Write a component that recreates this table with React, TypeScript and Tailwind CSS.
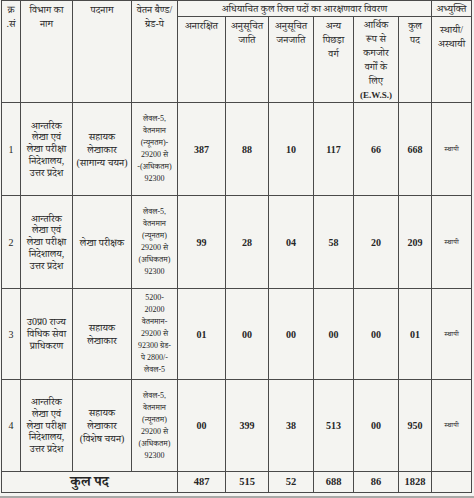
import React from "react";

type Row = {
  no: string;
  dept: string[];
  post: string[];
  pay: string[];
  nums: string[];
  remark: string;
  rowH: string;
};

const dept = ["आन्तरिक", "लेखा एवं", "लेखा परीक्षा", "निदेशालय,", "उत्तर प्रदेश"];

const rows: Row[] = [
  {
    no: "1",
    dept,
    post: ["सहायक", "लेखाकार", "(सामान्य चयन)"],
    pay: ["लेवल-5,", "वेतनमान", "(न्यूनतम)-", "29200 से", "-(अधिकतम)", "92300"],
    nums: ["387", "88", "10", "117", "66", "668"],
    remark: "स्थायी",
    rowH: "h-[93px]",
  },
  {
    no: "2",
    dept,
    post: ["लेखा परीक्षक"],
    pay: ["लेवल-5,", "वेतनमान", "(न्यूनतम)", "29200 से", "(अधिकतम)", "92300"],
    nums: ["99", "28", "04", "58", "20", "209"],
    remark: "स्थायी",
    rowH: "h-[93px]",
  },
  {
    no: "3",
    dept: ["उ0प्र0 राज्य", "विधिक सेवा", "प्राधिकरण"],
    post: ["सहायक", "लेखाकार"],
    pay: ["5200-", "20200", "वेतनमान-", "29200 से", "92300 ग्रेड-", "पे 2800/-", "लेवल-5"],
    nums: ["01", "00", "00", "00", "00", "01"],
    remark: "स्थायी",
    rowH: "h-[91px]",
  },
  {
    no: "4",
    dept,
    post: ["सहायक", "लेखाकार", "(विशेष चयन)"],
    pay: ["लेवल-5,", "वेतनमान", "(न्यूनतम)", "29200 से", "(अधिकतम)", "92300"],
    nums: ["00", "399", "38", "513", "00", "950"],
    remark: "स्थायी",
    rowH: "h-[92px]",
  },
];

const totals = ["487", "515", "52", "688", "86", "1828"];

const cell = "border border-[#4a4a4a] text-center align-middle px-[2px] py-0";
const head = "border border-[#4a4a4a] text-center align-top px-[2px] pt-[1px] pb-0 text-[10px] leading-[14px] text-[#2a2a2a] font-normal";

function Lines({ items }: { items: string[] }) {
  return (
    <>
      {items.map((t, i) => (
        <div key={i} className="whitespace-nowrap">
          {t}
        </div>
      ))}
    </>
  );
}

export default function App() {
  return (
    <div className="w-[474px] h-[498px] bg-[#a9a9a7] overflow-hidden font-['Liberation_Serif','Noto_Serif_Devanagari','Noto_Sans_Devanagari',serif] text-[#262626]">
      <div className="w-[474px] h-[496px] bg-[#f4f4f1] pl-[1px]">
        <table className="table-fixed border-collapse w-[470px]">
          <colgroup>
            <col className="w-[19px]" />
            <col className="w-[52px]" />
            <col className="w-[59px]" />
            <col className="w-[46px]" />
            <col className="w-[48px]" />
            <col className="w-[43px]" />
            <col className="w-[45px]" />
            <col className="w-[40px]" />
            <col className="w-[45px]" />
            <col className="w-[33px]" />
            <col className="w-[40px]" />
          </colgroup>
          <thead>
            <tr className="h-[15px]">
              <th rowSpan={2} className={`${head} pt-[2px]`}>
                <div>क्र</div>
                <div>.सं</div>
              </th>
              <th rowSpan={2} className={`${head} pt-[2px]`}>
                <div>विभाग का</div>
                <div>नाम</div>
              </th>
              <th rowSpan={2} className={`${head} pt-[2px]`}>
                पदनाम
              </th>
              <th rowSpan={2} className={`${head} pt-[2px]`}>
                <div>वेतन बैण्ड/</div>
                <div>ग्रेड-पे</div>
              </th>
              <th colSpan={6} className={`${head} whitespace-nowrap text-[10.5px] leading-[13px] pt-0`}>
                अधियाचित कुल रिक्त पदों का आरक्षणवार विवरण
              </th>
              <th className={`${head} leading-[13px] pt-0`}>अभ्युक्ति</th>
            </tr>
            <tr className="h-[84px]">
              <th className={`${head} pt-[2px]`}>अनारक्षित</th>
              <th className={`${head} pt-[2px]`}>
                <div>अनुसूचित</div>
                <div>जाति</div>
              </th>
              <th className={`${head} pt-[2px]`}>
                <div>अनुसूचित</div>
                <div>जनजाति</div>
              </th>
              <th className={`${head} pt-[2px]`}>
                <div>अन्य</div>
                <div>पिछड़ा</div>
                <div>वर्ग</div>
              </th>
              <th className={`${head} pt-[1px] leading-[13.2px]`}>
                <div>आर्थिक</div>
                <div>रूप से</div>
                <div>कमजोर</div>
                <div>वर्गों के</div>
                <div>लिए</div>
                <div className="text-[9px] font-bold">(E.W.S.)</div>
              </th>
              <th className={`${head} pt-[2px]`}>
                <div>कुल</div>
                <div>पद</div>
              </th>
              <th className={`${head} pt-[6px] text-[7px] leading-[11px]`}>
                <div>स्थायी/</div>
                <div>अस्थायी</div>
              </th>
            </tr>
          </thead>
          <tbody>
            {rows.map((r) => (
              <tr key={r.no} className={r.rowH}>
                <td className={`${cell} text-[10px]`}>{r.no}</td>
                <td className={`${cell} text-[10px] leading-[11.7px]`}>
                  <Lines items={r.dept} />
                </td>
                <td className={`${cell} text-[10px] leading-[13px]`}>
                  <Lines items={r.post} />
                </td>
                <td className={`${cell} text-[8px] leading-[12px]`}>
                  <Lines items={r.pay} />
                </td>
                {r.nums.map((n, i) => (
                  <td key={i} className={`${cell} text-[10px] font-bold`}>
                    {n}
                  </td>
                ))}
                <td className={`${cell} text-[7px]`}>{r.remark}</td>
              </tr>
            ))}
            <tr className="h-[21px]">
              <td colSpan={4} className={`${cell} text-[14px] font-bold leading-[18px]`}>
                कुल पद
              </td>
              {totals.map((n, i) => (
                <td key={i} className={`${cell} text-[10.5px] font-bold`}>
                  {n}
                </td>
              ))}
              <td className={cell}></td>
            </tr>
          </tbody>
        </table>
      </div>
    </div>
  );
}
